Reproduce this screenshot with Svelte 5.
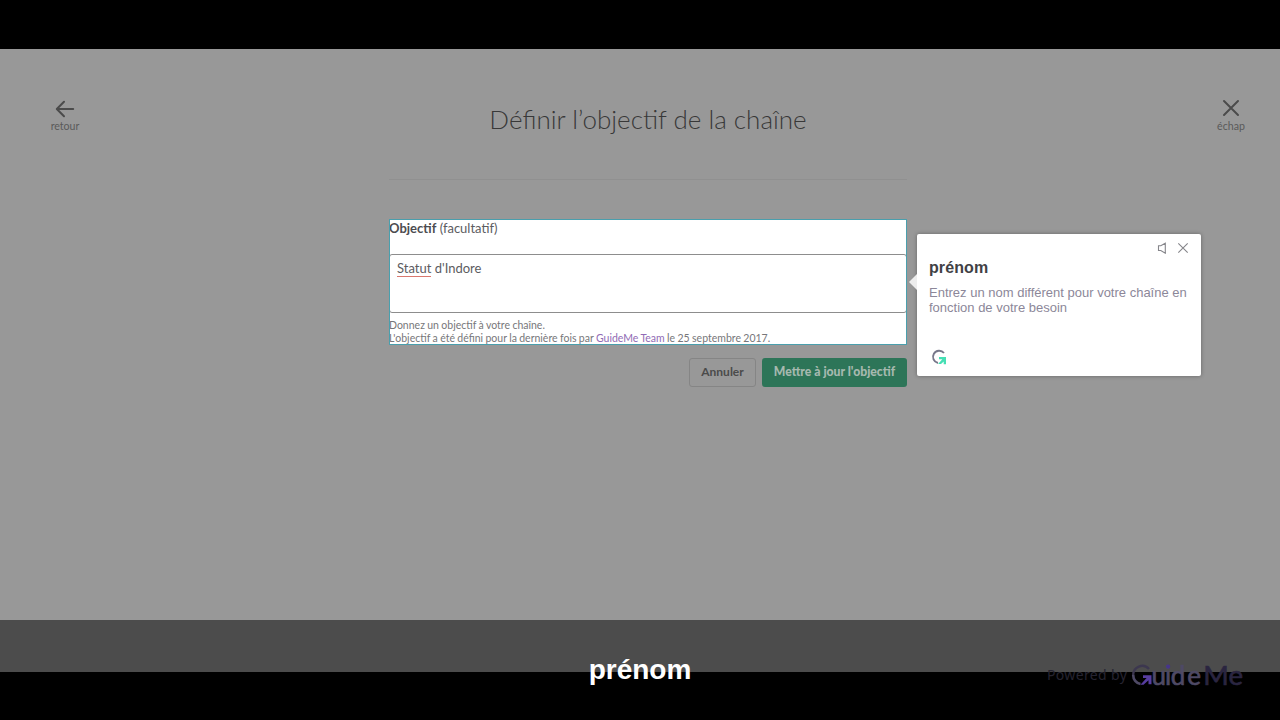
<script lang="ts">
  const caption = 'prénom';
</script>

<div class="screen">
  <main class="page">
    <button class="nav back">
      <svg width="20" height="18" viewBox="0 0 20 18"><path d="M9 1.8 1.8 9 9 16.2M2 9h16.2" /></svg>
      <span>retour</span>
    </button>
    <section class="content">
      <h1>Définir l’objectif de la chaîne</h1>
      <div class="field">
        <label for="goal"><b>Objectif</b> (facultatif)</label>
        <div id="goal" class="input"><u>Statut</u> d'Indore</div>
        <p class="hint">
          <span>Donnez un objectif à votre chaîne.</span><br />
          <span>L'objectif a été défini pour la dernière fois par <a>GuideMe Team</a> le 25 septembre 2017.</span>
        </p>
      </div>
      <div class="actions">
        <button class="cancel">Annuler</button>
        <button class="save">Mettre à jour l'objectif</button>
      </div>
    </section>
    <button class="nav esc">
      <svg width="18" height="18" viewBox="0 0 18 18"><path d="M2 2 16 16M16 2 2 16" /></svg>
      <span>échap</span>
    </button>
  </main>

  <aside class="tip">
    <div class="tools">
      <svg width="10" height="12" viewBox="0 0 10 12"><path d="M1.5 3.8h2.3L8.3 1.2v10L3.8 8.5H1.5z" /></svg>
      <svg width="12" height="12" viewBox="0 0 12 12"><path d="M1.3 1.3l9.4 9.4M10.7 1.3 1.3 10.7" /></svg>
    </div>
    <h2>{caption}</h2>
    <p>Entrez un nom différent pour votre chaîne en fonction de votre besoin</p>
    <svg class="mark" width="17" height="17" viewBox="0 0 17 17">
      <path d="M13 4A6.2 6.2 0 1 0 7 14" fill="none" stroke="#77778a" stroke-width="1.9" />
      <path d="M8 8h7v7.3h-2.3v-2.9L10 15H7.1l4.2-4.7H8z" fill="#45dfb4" />
    </svg>
  </aside>

  <footer>
    <strong>{caption}</strong>
    <div class="brand">
      <span>Powered by</span>
      <svg width="116" height="40" viewBox="0 -8 116 40">
        <path d="M18 6A9 9 0 0 0 2.2 12.3" fill="none" stroke="#3c374f" stroke-width="2.4" />
        <path d="M2.2 12a9 9 0 0 0 7.3 9" fill="none" stroke="#4e4965" stroke-width="2.6" />
        <path d="M12 12.3H20.5v9h-3v-4l-5 4.4H9.4l6.2-6.6H12z" fill="#573da0" />
        <text class="lower" x="20.4 34 39.8 56.3" y="22" fill="#4e4965">uide</text>
        <text x="72.3 97.6" y="22" fill="#2a2540">Me</text>
        <circle cx="37.1" cy="3.6" r="2.1" fill="#46358a" />
      </svg>
    </div>
  </footer>
</div>

<style>
  :global(body) { margin: 0; background: #000; }
  .screen {
    position: relative;
    box-sizing: border-box;
    width: 1280px;
    height: 720px;
    padding: 49px 0 48px;
    overflow: hidden;
    background: #000;
    font-family: Lato, sans-serif;
  }
  .page {
    display: grid;
    grid-template-columns: 389px 518px 373px;
    align-items: start;
    height: 623px;
    background: #989898;
    color: #4b4b4b;
  }
  button { font: inherit; border: 0; padding: 0; margin: 0; background: none; color: inherit; white-space: nowrap; }
  .nav {
    display: flex;
    flex-direction: column;
    align-items: center;
    gap: 2px;
    width: 40px;
    margin-top: 51px;
    font-size: 10.6px;
    line-height: 13px;
    color: #5a5a5a;
  }
  .nav svg { fill: none; stroke: #4b4b4b; stroke-width: 2; stroke-linecap: round; stroke-linejoin: round; }
  .back { margin-left: 45px; }
  .esc { justify-self: end; margin-right: 29px; margin-top: 50px; gap: 3px; }
  .content { display: flex; flex-direction: column; }
  h1 {
    height: 83px;
    margin: 47px 0 39px;
    border-bottom: 1px solid #909090;
    font-size: 26px;
    font-weight: 300;
    line-height: 46px;
    text-align: center;
    white-space: nowrap;
    color: #383838;
  }
  .field {
    position: relative;
    box-sizing: border-box;
    height: 126px;
    padding-top: 1px;
    background: #fff;
    color: #5c5c5f;
  }
  .field::after {
    content: "";
    position: absolute;
    inset: 0;
    border: 1px solid #4a9fad;
    pointer-events: none;
  }
  label { display: block; height: 34px; font-size: 13px; line-height: 17px; }
  label b { color: #4c4c50; }
  .input {
    box-sizing: border-box;
    height: 59px;
    padding: 5px 7px;
    border: 1px solid #8d8d8d;
    border-radius: 3px;
    font-size: 13px;
    line-height: 17px;
  }
  .input u { text-decoration: none; border-bottom: 1px solid #d9786f; }
  .hint { margin: 6px 0 0; font-size: 10.5px; word-spacing: -.3px; line-height: 13px; color: #77777a; white-space: nowrap; }
  .hint a { color: #916bb5; }
  .actions { display: flex; justify-content: flex-end; gap: 6px; margin-top: 13px; font-size: 12px; font-weight: 700; }
  .actions button { box-sizing: border-box; height: 29px; border-radius: 3px; line-height: 24px; padding-bottom: 2px; }
  .cancel { width: 67px; border: 1px solid #858585; }
  .actions .save { width: 145px; background: #2d7558; color: #a6b9af; font-weight: 900; font-size: 12.2px; }
  .tip {
    position: absolute;
    box-sizing: border-box;
    left: 917px;
    top: 234px;
    width: 284px;
    height: 142px;
    padding: 8px 12px;
    border-radius: 2px;
    background: #fff;
    box-shadow: 0 0 4px #0005;
    font-family: "Liberation Sans", Arial, sans-serif;
  }
  .tip::before {
    content: "";
    position: absolute;
    left: -8px;
    top: 40px;
    border: solid transparent;
    border-width: 8px 8px 8px 0;
    border-right-color: #ededed;
  }
  .tools { display: flex; justify-content: flex-end; gap: 10px; height: 12px; }
  .tools svg { fill: none; stroke: #85858a; stroke-width: 1.1; }
  h2 { margin: 4px 0 7px; font-size: 16px; line-height: 20px; letter-spacing: .1px; color: #414145; }
  .tip p { margin: 0; font-size: 13px; line-height: 15px; color: #8c8799; }
  .mark { display: block; margin: 34px 0 0 2px; }
  footer {
    position: absolute;
    left: 0;
    right: 0;
    bottom: 0;
    display: grid;
    grid-template-columns: 1047px auto;
    height: 100px;
    background: rgb(0 0 0 / 50%);
  }
  footer strong {
    grid-area: 1 / 1 / 2 / 3;
    width: 1280px;
    padding-top: 34px;
    color: #fff;
    font: 700 28px/32px "Liberation Sans", Arial, sans-serif;
    text-align: center;
  }
  .brand { grid-area: 1 / 2; display: flex; gap: 3px; padding-top: 35px; white-space: nowrap; }
  .brand span { width: 81px; padding-top: 8px; font: 14px/24px "Noto Sans", sans-serif; letter-spacing: .35px; color: #262431; }
  .brand svg { overflow: visible; }
  .brand text { font: 400 27.5px Lato, sans-serif; stroke: #2a2540; stroke-width: .7; }
  .brand .lower { font-size: 26px; stroke: #4e4965; }
</style>
